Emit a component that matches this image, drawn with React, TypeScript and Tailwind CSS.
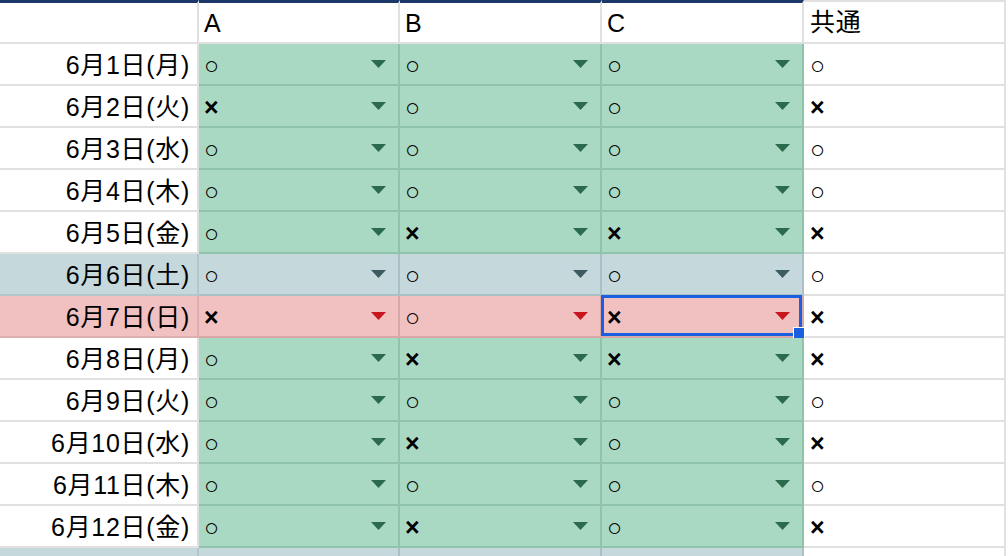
import React from "react";

type Tone = "green" | "blue" | "pink";

type Row = {
  label: string;
  vals: string[];
  common: string;
  tone: Tone;
};

const rows: Row[] = [
  { label: "6月1日(月)", vals: ["○", "○", "○"], common: "○", tone: "green" },
  { label: "6月2日(火)", vals: ["×", "○", "○"], common: "×", tone: "green" },
  { label: "6月3日(水)", vals: ["○", "○", "○"], common: "○", tone: "green" },
  { label: "6月4日(木)", vals: ["○", "○", "○"], common: "○", tone: "green" },
  { label: "6月5日(金)", vals: ["○", "×", "×"], common: "×", tone: "green" },
  { label: "6月6日(土)", vals: ["○", "○", "○"], common: "○", tone: "blue" },
  { label: "6月7日(日)", vals: ["×", "○", "×"], common: "×", tone: "pink" },
  { label: "6月8日(月)", vals: ["○", "×", "×"], common: "×", tone: "green" },
  { label: "6月9日(火)", vals: ["○", "○", "○"], common: "○", tone: "green" },
  { label: "6月10日(水)", vals: ["○", "×", "○"], common: "×", tone: "green" },
  { label: "6月11日(木)", vals: ["○", "○", "○"], common: "○", tone: "green" },
  { label: "6月12日(金)", vals: ["○", "×", "○"], common: "×", tone: "green" },
];

const tones: Record<Tone, { cell: string; head: string; tri: string }> = {
  green: {
    cell: "bg-[#aad9c3] border-[#90c3ab]",
    head: "bg-white border-[#e0e0e0]",
    tri: "#2b6b4c",
  },
  blue: {
    cell: "bg-[#c5d9dc] border-[#a9c1c4]",
    head: "bg-[#c5d9dc] border-[#b3c7ca]",
    tri: "#3c5c62",
  },
  pink: {
    cell: "bg-[#f1c1c1] border-[#d8a8a9]",
    head: "bg-[#f1c1c1] border-[#dcb0b1]",
    tri: "#c8161e",
  },
};

const font = {
  fontFamily: '"Liberation Sans", Arial, "Noto Sans CJK JP", sans-serif',
};

/** ドロップダウンの三角 */
function Caret({ color }: { color: string }) {
  return (
    <svg width="15" height="8" viewBox="0 0 15 8" className="mb-[1px] shrink-0">
      <polygon points="0,0 15,0 7.5,8" fill={color} />
    </svg>
  );
}

const App = () => {
  return (
    <div
      className="h-[556px] w-[1008px] overflow-hidden bg-white text-[25px] tracking-[0.7px] text-black"
      style={font}
    >
      {/* 見出し行 */}
      <div className="flex h-[44px]">
        <div className="w-[199px] shrink-0 border-t-[3px] border-r-2 border-b-2 border-t-[#1d3768] border-r-[#e0e0e0] border-b-[#e0e0e0]" />
        {["A", "B", "C"].map((h, i) => (
          <div
            key={h}
            className={`${i === 0 ? "w-[201px]" : "w-[202px]"} flex shrink-0 items-center border-t-[3px] border-r-2 border-b-2 border-t-[#1d3768] border-r-[#e0e0e0] border-b-[#e0e0e0] pt-[2px] pl-[5px]`}
          >
            {h}
          </div>
        ))}
        <div className="flex w-[202px] shrink-0 items-center border-t-2 border-r-2 border-b-2 border-[#e0e0e0] pt-[2px] pl-[6px]">
          共通
        </div>
      </div>

      {rows.map((r, ri) => {
        const t = tones[r.tone];
        return (
          <div key={r.label} className="flex h-[42px]">
            <div
              className={`flex w-[199px] shrink-0 items-center justify-end border-r-2 border-b-2 pt-[3px] pr-[7px] ${t.head}`}
            >
              {r.label}
            </div>
            {r.vals.map((v, ci) => (
              <div
                key={ci}
                className={`relative flex ${ci === 0 ? "w-[201px]" : "w-[202px]"} shrink-0 items-center justify-between border-r-2 border-b-2 pr-[12px] pl-[5px] ${t.cell}`}
              >
                <span className={v === "×" ? "pt-[3px] font-bold" : "pt-[4px]"}>{v}</span>
                <Caret color={t.tri} />
                {ri === 6 && ci === 2 && (
                  <>
                    <div className="absolute top-[-1px] right-0 bottom-0 left-[-1px] border-[3px] border-[#1a5fe0]" />
                    <div className="absolute -right-[3px] -bottom-[3px] h-[12px] w-[12px] border border-white bg-[#1a5fe0]" />
                  </>
                )}
              </div>
            ))}
            <div className="flex w-[202px] shrink-0 items-center border-r-2 border-b-2 border-[#e0e0e0] bg-white pl-[6px]">
              <span className={r.common === "×" ? "pt-[3px] font-bold" : "pt-[4px]"}>{r.common}</span>
            </div>
          </div>
        );
      })}

      {/* 次の行(見切れ) */}
      <div className="flex h-[42px]">
        <div className="w-[199px] shrink-0 border-r-2 border-[#b3c7ca] bg-[#c5d9dc]" />
        <div className="w-[201px] shrink-0 border-r-2 border-[#a9c1c4] bg-[#c5d9dc]" />
        <div className="w-[202px] shrink-0 border-r-2 border-[#a9c1c4] bg-[#c5d9dc]" />
        <div className="w-[202px] shrink-0 border-r-2 border-[#a9c1c4] bg-[#c5d9dc]" />
        <div className="w-[202px] shrink-0 border-r-2 border-[#e0e0e0] bg-white" />
      </div>
    </div>
  );
};

export default App;
